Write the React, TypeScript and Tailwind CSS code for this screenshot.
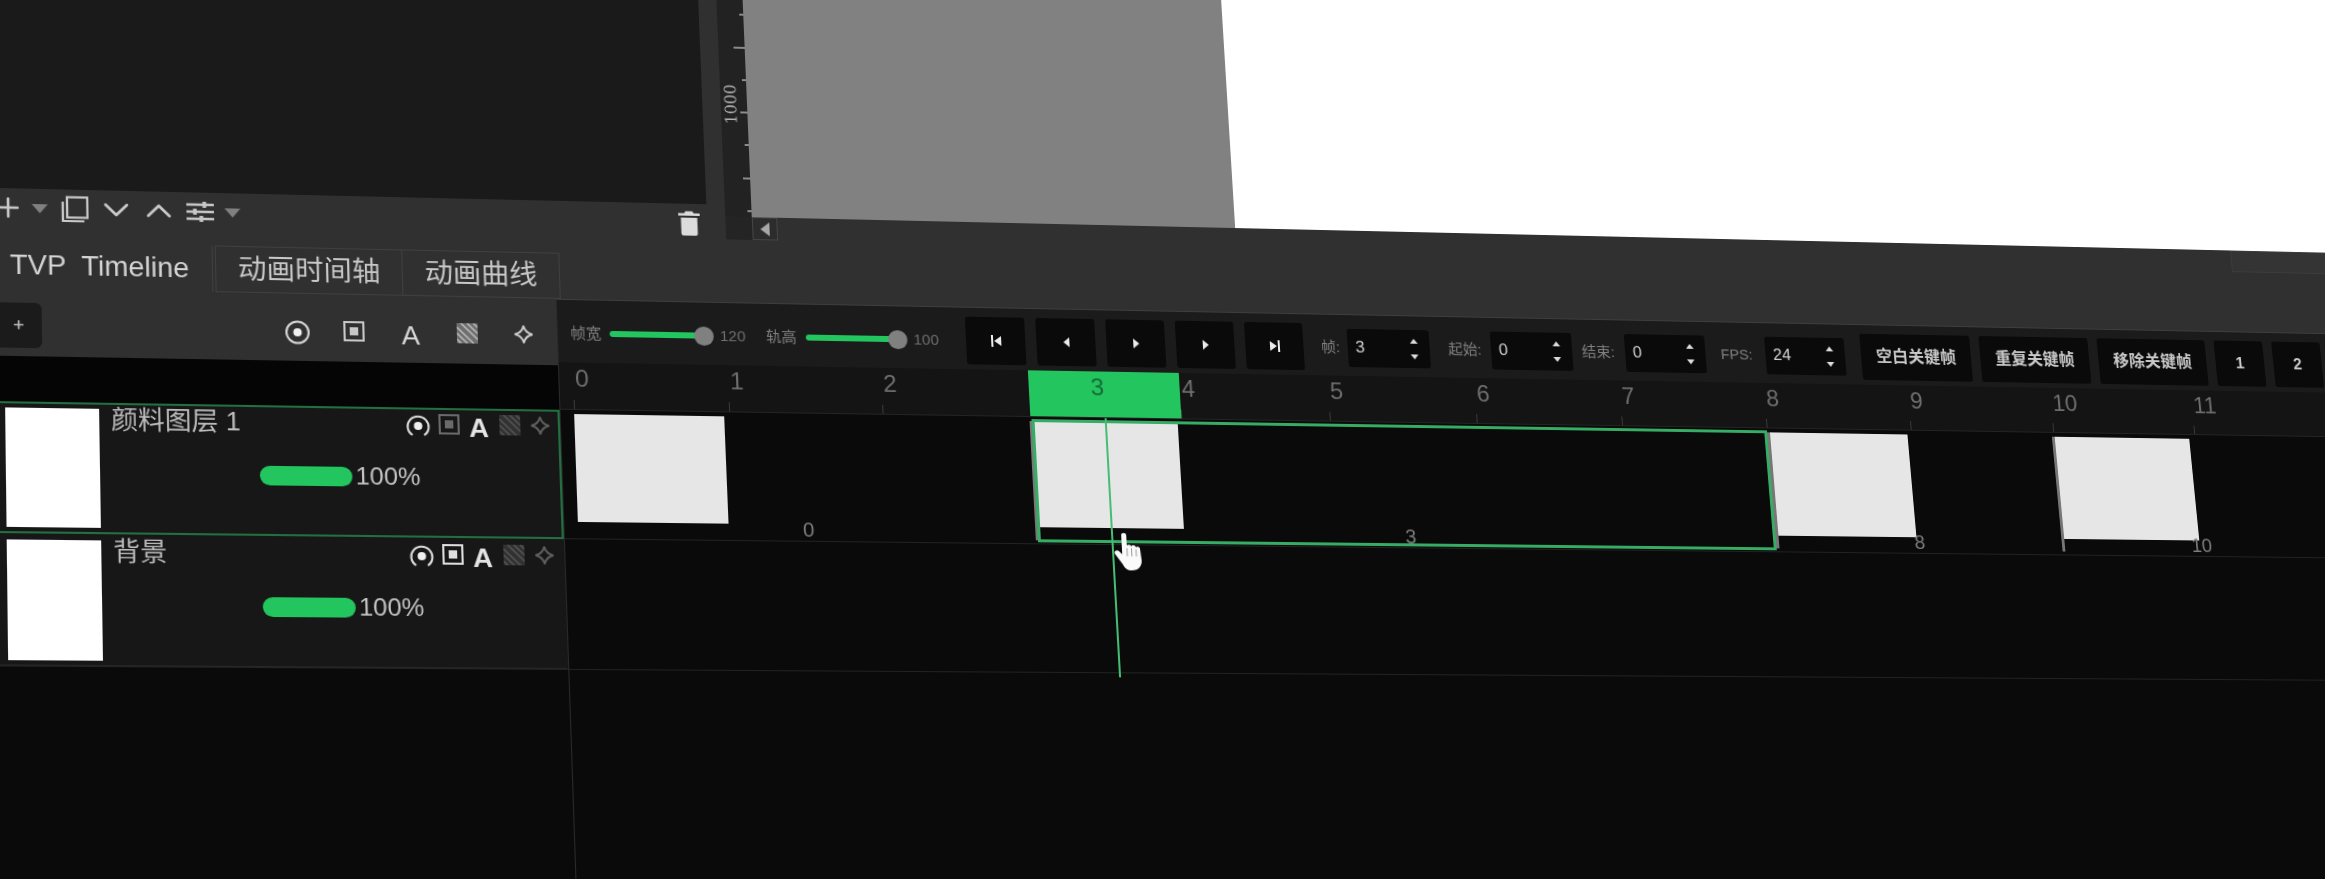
import { ChevronDown, ChevronUp, Plus } from "lucide-react";

const RULER_CELLS = ["w-[150px]", "w-[150px]", "w-[146px]", "w-[151px]", "w-[150px]", "w-[150px]", "w-[150px]", "w-[151px]", "w-[152px]", "w-[152px]", "w-[152px]", "w-[150px]"];

function Caret() {
  return (
    <svg width="15" height="11" viewBox="0 0 15 11" className="shrink-0">
      <path d="M0 1h15L7.500 10z" fill="#808080" />
    </svg>
  );
}

function CopyIcon() {
  return (
    <svg width="26" height="27" viewBox="0 0 26 27" fill="none" stroke="#c8c8c8" strokeWidth="2.2" className="shrink-0">
      <rect x="6" y="1.5" width="19" height="20" />
      <path d="M2 6v19h20" />
    </svg>
  );
}

function SlidersIcon() {
  return (
    <svg width="26" height="22" viewBox="0 0 26 22" stroke="#c8c8c8" strokeWidth="2.4" className="shrink-0">
      <path d="M0 4h26M0 11h26M0 18h26" />
      <path d="M17 1v6M8 8v6M14 15v6" strokeWidth="3.4" />
    </svg>
  );
}

function TrashIcon() {
  return (
    <svg width="21" height="26" viewBox="0 0 21 26" fill="#dcdcdc" className="shrink-0">
      <path d="M7 1.5h7l1 2h6v2.500H0V3.500h6z" />
      <path d="M2.500 8h16v16a2 2 0 0 1-2 2h-12a2 2 0 0 1-2-2z" />
    </svg>
  );
}

function CircleIcon({ open }: { open?: boolean }) {
  return (
    <svg width="25" height="24" viewBox="0 0 25 24" fill="none" stroke="#d8d8d8" strokeWidth="2">
      {open ? <path d="M7 21a10 10 0 1 1 11 0" /> : <circle cx="12.5" cy="12" r="10.5" />}
      <circle cx="12.5" cy="12" r="4" fill="#f0f0f0" stroke="none" />
    </svg>
  );
}

function SquareIcon({ color }: { color: string }) {
  return (
    <svg width="20" height="20" viewBox="0 0 20 20" fill="none" stroke={color} strokeWidth="2">
      <rect x="1" y="1" width="18" height="18" />
      <rect x="6" y="6" width="8" height="8" fill={color} stroke="none" />
    </svg>
  );
}

function HatchIcon({ color }: { color: string }) {
  return (
    <svg width="20" height="20" viewBox="0 0 20 20" fill="none" stroke={color} strokeWidth="1.5">
      <rect x="0" y="0" width="20" height="20" fill={color} fillOpacity="0.45" stroke="none" />
      <path d="M0 4l16 16M0 10l10 10M4 0l16 16M10 0l10 10M0 16l4 4M16 0l4 4" />
    </svg>
  );
}

function DiamondIcon({ color }: { color: string }) {
  return (
    <svg width="20" height="20" viewBox="0 0 20 20" fill="none" stroke={color} strokeWidth="1.8">
      <path d="M10 1.5Q11.5 8.500 18.500 10Q11.500 11.500 10 18.500Q8.500 11.500 1.500 10Q8.500 8.500 10 1.500z" />
    </svg>
  );
}

function HandCursor() {
  return (
    <svg width="30" height="39" viewBox="0 0 30 39" fill="#fafafa">
      <path d="M8 3c0-3 5-3 5 0v11c0-2 4-2 4.500.5c0-2 4-2 4.500.5c.5-1.500 4-1 4 1.500L27 28c0 6-4 10-10 10c-5 0-7-2-9-6L1 22c-2-3 2-5 4-3l3 3z" />
      <path d="M13 16v8M17.500 16v8M22 17v7" stroke="#9a9a9a" strokeWidth="1" />
    </svg>
  );
}

function TransportButton({ shape }: { shape: string }) {
  return (
    <div className="flex h-[48px] w-[59px] items-center justify-center rounded-[3px] bg-[#0a0a0a]">
      <svg width="14" height="14" viewBox="0 0 14 14" fill="#ececec">
        <path d={shape} />
      </svg>
    </div>
  );
}

function Spin({ label, value, labelWidth }: { label: string; value: string; labelWidth: string }) {
  return (
    <>
      <span className={`${labelWidth} whitespace-nowrap text-[15px] text-[#808080]`}>{label}</span>
      <div className="flex h-[39px] w-[84px] items-center justify-between rounded-[3px] bg-[#0a0a0a] pl-[8px] pr-[12px]">
        <span className="text-[17px] text-[#d0d0d0]">{value}</span>
        <div className="flex flex-col gap-[11px]">
          <svg width="8" height="5" viewBox="0 0 8 5"><path d="M4 0l4 5H0z" fill="#dddddd" /></svg>
          <svg width="8" height="5" viewBox="0 0 8 5"><path d="M0 0h8L4 5z" fill="#dddddd" /></svg>
        </div>
      </div>
    </>
  );
}

function Slider({ value, width }: { value: string; width: string }) {
  return (
    <div className="flex items-center">
      <div className={`${width} flex items-center`}>
        <div className="h-[6px] flex-1 rounded-full bg-[#22c55e]" />
        <div className="-ml-[9px] h-[19px] w-[19px] rounded-full bg-[#808080]" />
      </div>
      <span className="ml-[6px] w-[30px] text-[15px] text-[#6f6f6f]">{value}</span>
    </div>
  );
}

function Keyframe({ label, width, marker, selected }: { label: string; width: string; marker: boolean; selected?: boolean }) {
  return (
    <div className={`${width} relative flex h-[127px] shrink-0 flex-col pt-[4px]`}>
      <div className="flex h-[106px]">
        {marker && <div className="h-[119px] w-[3px] shrink-0 bg-[#777777]" />}
        <div className="h-[106px] w-[145px] shrink-0 bg-[#e6e6e6]" />
      </div>
      <div className="-mt-[5px] text-center text-[20px] leading-[20px] text-[#7d7d7d]">{label}</div>
      {selected && <div className="absolute bottom-[2px] left-[2px] right-0 top-[2px] border-[3px] border-[#36ac64]" />}
    </div>
  );
}

function LayerRow({ name, selected, squareColor }: { name: string; selected?: boolean; squareColor: string }) {
  return (
    <div className={`box-border flex h-[127px] bg-[#171717] pl-[24px] pt-[4px] border-2 border-l-0 ${selected ? "border-[#226f42]" : "border-transparent border-b-[#252525]"}`}>
      <div className="h-[115px] w-[87px] shrink-0 bg-white" />
      <div className="flex-1">
        <div className="-mt-[4px] flex h-[34px] items-center justify-between pl-[11px] pr-[3px]">
          <span className="-mt-[5px] text-[25px] leading-none text-[#bdbdbd]">{name}</span>
          <div className="flex">
            <div className="flex w-[29px] justify-center"><CircleIcon open /></div>
            <div className="flex w-[29px] justify-center"><SquareIcon color={squareColor} /></div>
            <div className="flex w-[29px] justify-center text-[26px] font-bold leading-none text-[#e4e4e4]">A</div>
            <div className="flex w-[29px] justify-center"><HatchIcon color="#555555" /></div>
            <div className="flex w-[29px] justify-center"><DiamondIcon color="#606060" /></div>
          </div>
        </div>
        <div className="ml-[149px] mt-[20px] flex items-center gap-[3px]">
          <div className="h-[19px] w-[87px] rounded-full bg-[#22c55e]" />
          <span className="text-[24px] leading-none text-[#c4c4c4]">100%</span>
        </div>
      </div>
    </div>
  );
}

export default function App() {
  const ticks = ["w-[4px]", "w-[7px]", "w-[4px]", "w-[11px]", "w-[4px]", "w-[7px]", "w-[4px]", "w-[7px]", "w-[4px]"];

  return (
    <div className="h-[879px] w-[2325px] overflow-hidden bg-white">
      {/* everything is laid out flat, the one transform gives the camera angle of the shot */}
      <div className="flex h-[950px] w-[2420px] origin-top-left flex-col bg-[#303030] blur-[0.6px] [font-family:'Liberation_Sans','Noto_Sans_CJK_SC',sans-serif] [transform:matrix3d(1.06167,0.031406,0,0.000037364,0.011811,0.99646,0,-0.000040524,0,0,1,0,-26.204,-85.888,0,0.998528)]">
        {/* upper part: layers panel + canvas */}
        <div className="flex h-[324px] shrink-0">
          <div className="flex w-[714px] shrink-0 flex-col">
            <div className="h-[272px] w-[696px] bg-[#1a1a1a]" />
            <div className="flex h-[38px] items-center pr-[25px] pl-[14px] text-[#c8c8c8]">
              <Plus size={30} strokeWidth={2} className="shrink-0" />
              <div className="ml-[7px]"><Caret /></div>
              <div className="ml-[12px]"><CopyIcon /></div>
              <ChevronDown size={40} strokeWidth={1.6} className="ml-[6px] shrink-0" />
              <ChevronUp size={40} strokeWidth={1.6} className="ml-0 shrink-0" />
              <div className="ml-[6px]"><SlidersIcon /></div>
              <div className="ml-[10px]"><Caret /></div>
              <div className="ml-auto"><TrashIcon /></div>
            </div>
          </div>
          <div className="flex flex-1 flex-col">
            <div className="flex h-[284px]">
              <div className="relative flex w-[26px] shrink-0 flex-col items-end justify-end gap-[31.300px] bg-[#222222] pb-[5px]">
                {ticks.map((len, i) => (
                  <div key={i} className={`h-[2px] bg-[#8c8c8c] ${len}`} />
                ))}
                <span className="absolute left-[-10px] top-[162px] -rotate-90 text-[16px] leading-none text-[#b4b4b4] [font-family:'DejaVu_Serif',serif]">1000</span>
              </div>
              <div className="w-[483px] shrink-0 bg-[#818181]" />
              <div className="flex-1 bg-white" />
            </div>
            <div className="flex h-[23px]">
              <div className="w-[26px] shrink-0 bg-[#242424]" />
              <div className="flex w-[25px] shrink-0 items-center justify-center border border-[#454545] bg-[#2c2c2c]">
                <svg width="9" height="14" viewBox="0 0 9 14"><path d="M9 0v14L0 7z" fill="#a8a8a8" /></svg>
              </div>
              <div className="ml-[1508px] flex-1 border border-[#3c3c3c] bg-[#343434]" />
            </div>
          </div>
        </div>

        {/* panel tabs */}
        <div className="flex h-[46px] shrink-0 items-stretch">
          <div className="flex w-[220px] items-center whitespace-pre border-r border-[#404040] pl-[30px] text-[27px] text-[#d4d4d4]">TVP  Timeline</div>
          <div className="ml-[2px] flex w-[178px] items-center justify-center border border-[#404040] text-[27px] text-[#c8c8c8]">动画时间轴</div>
          <div className="flex w-[151px] items-center justify-center border border-l-0 border-[#404040] text-[27px] text-[#c8c8c8]">动画曲线</div>
        </div>

        <div className="flex flex-1">
          {/* layer list */}
          <div className="flex w-[547px] shrink-0 flex-col border-r border-[#2a2a2a] bg-[#0a0a0a]">
            <div className="flex h-[66px] items-center bg-[#303030] pt-[11px] pr-[5px]">
              <div className="-mt-[6px] flex h-[44px] w-[59px] items-center justify-end rounded-r-[6px] bg-[#1b1b1b] pr-[15px]">
                <Plus size={13} strokeWidth={3} className="text-[#bbbbbb]" />
              </div>
              <div className="ml-auto flex">
                <div className="flex w-[54px] justify-center"><CircleIcon /></div>
                <div className="flex w-[54px] justify-center"><SquareIcon color="#c8c8c8" /></div>
                <div className="flex w-[54px] justify-center text-[26px] leading-none text-[#d8d8d8]">A</div>
                <div className="flex w-[54px] justify-center"><HatchIcon color="#bdbdbd" /></div>
                <div className="flex w-[54px] justify-center"><DiamondIcon color="#d0d0d0" /></div>
              </div>
            </div>
            <div className="h-[44px] bg-[#050505]" />
            <LayerRow name="颜料图层 1" selected squareColor="#6a6a6a" />
            <LayerRow name="背景" squareColor="#dedede" />
          </div>

          {/* timeline */}
          <div className="flex min-w-0 flex-1 flex-col bg-[#0a0a0a]">
            <div className="box-border flex h-[63px] shrink-0 items-center border-t border-[#3e3e3e] bg-[#1b1b1b] pl-[12px] pt-[4px]">
              <span className="w-[38px] text-[15px] text-[#808080]">帧宽</span>
              <Slider value="120" width="w-[101px]" />
              <span className="ml-[15px] w-[39px] text-[15px] text-[#808080]">轨高</span>
              <Slider value="100" width="w-[100px]" />
              <div className="ml-[22px] flex gap-[11px]">
                <TransportButton shape="M2 1h2v12H2zM12 2v10L5 7z" />
                <TransportButton shape="M10 2v10L4 7z" />
                <TransportButton shape="M4 2v10l6-5z" />
                <TransportButton shape="M4 2v10l6-5z" />
                <TransportButton shape="M2 2v10l7-5zM10 1h2v12h-2z" />
              </div>
              <div className="ml-[18px] flex items-center">
                <Spin label="帧:" value="3" labelWidth="w-[27px]" />
                <div className="w-[19px]" />
                <Spin label="起始:" value="0" labelWidth="w-[44px]" />
                <div className="w-[10px]" />
                <Spin label="结束:" value="0" labelWidth="w-[45px]" />
                <div className="w-[16px]" />
                <Spin label="FPS:" value="24" labelWidth="w-[47px]" />
              </div>
              <div className="ml-[17px] flex gap-[10px] text-[17px] font-bold text-[#c9c9c9]">
                {["空白关键帧", "重复关键帧", "移除关键帧"].map((label) => (
                  <div key={label} className="flex h-[48px] w-[117px] items-center justify-center rounded-[3px] bg-[#0a0a0a]">{label}</div>
                ))}
                {["1", "2"].map((label) => (
                  <div key={label} className="flex h-[48px] w-[53px] items-center justify-center rounded-[3px] bg-[#0a0a0a]">{label}</div>
                ))}
              </div>
            </div>

            <div className="flex h-[47px] shrink-0 border-b border-[#242424] bg-[#141414] pl-[13px]">
              {RULER_CELLS.map((width, i) => (
                <div key={i} className={`${width} relative flex h-full shrink-0 text-[24px] leading-[32px] ${i === 3 ? "justify-center bg-[#22c55e] pr-[14px] text-[#166a35]" : "pl-[2px] text-[#6e6e6e]"}`}>
                  {i}
                  {i !== 3 && <div className="absolute bottom-0 left-0 h-[9px] w-px bg-[#3a3a3a]" />}
                </div>
              ))}
            </div>

            <div className="relative flex-1">
              <div className="flex h-[127px] border-b border-[#222222] pl-[13px]">
                <Keyframe label="0" width="w-[445px]" marker={false} />
                <Keyframe label="3" width="w-[753px]" marker selected />
                <Keyframe label="8" width="w-[302px]" marker />
                <Keyframe label="10" width="w-[300px]" marker />
              </div>
              <div className="h-[127px] border-b border-[#222222]" />
              <div className="absolute left-[533px] top-0 h-[258px] w-[2px] bg-[#45bd74]" />
              <div className="absolute left-[535px] top-[114px]"><HandCursor /></div>
            </div>
          </div>
        </div>
      </div>
    </div>
  );
}
